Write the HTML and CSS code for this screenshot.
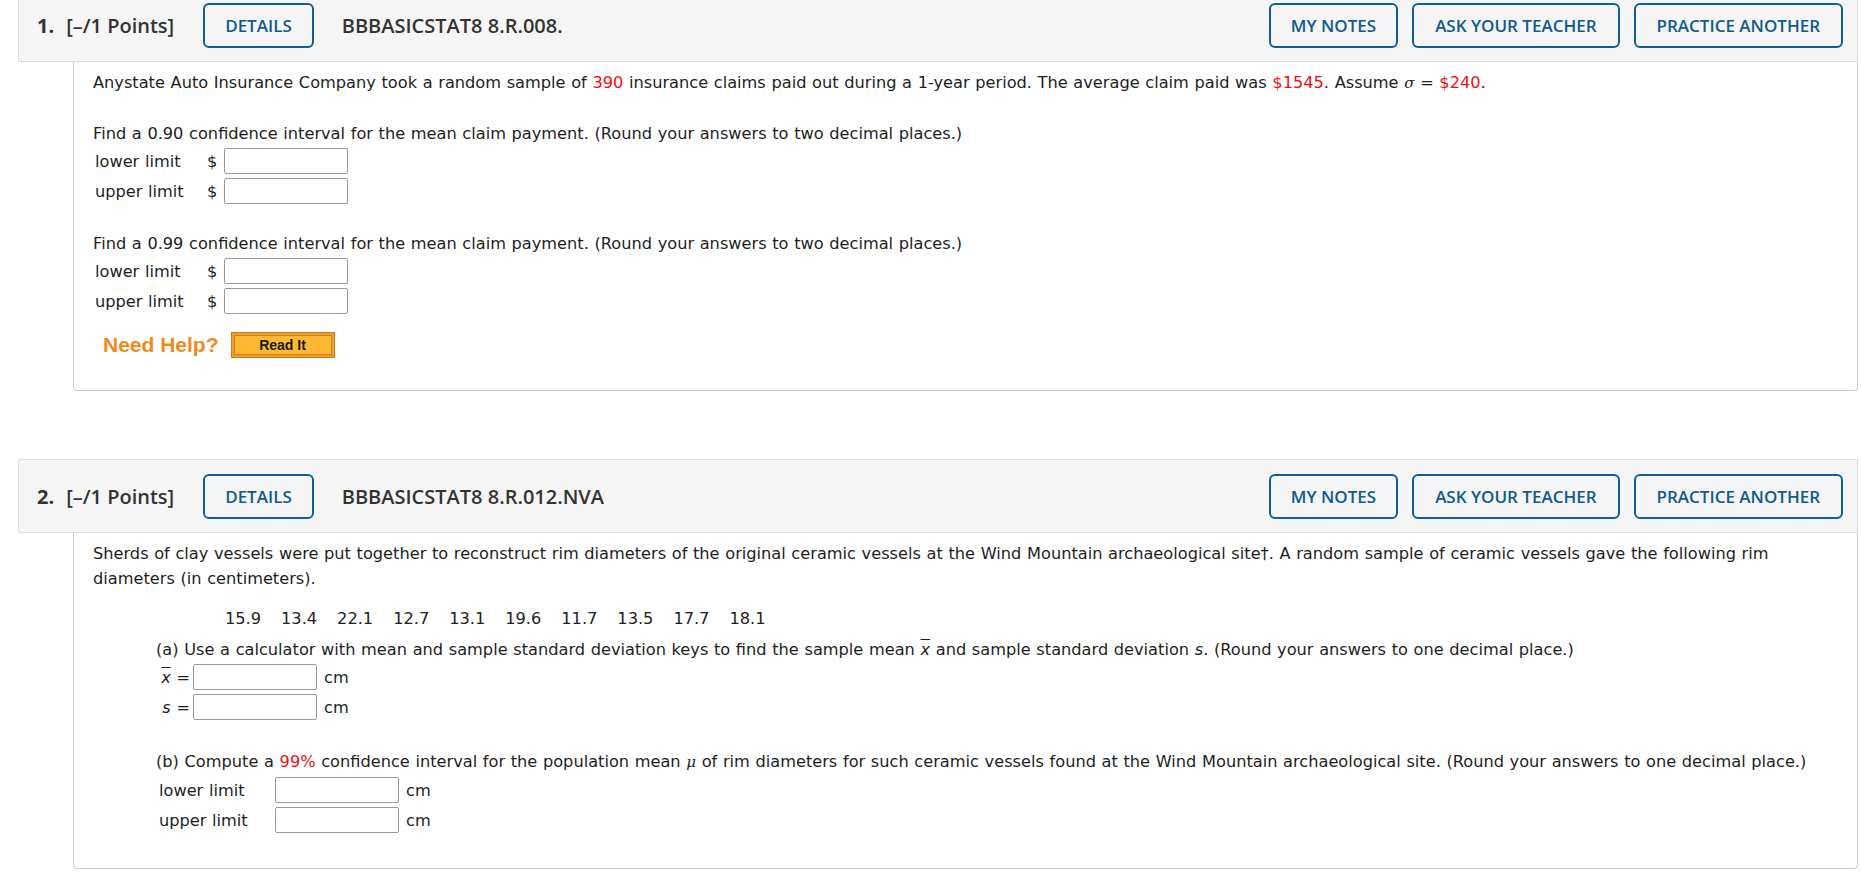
FILE: index.html
```html
<!DOCTYPE html>
<html lang="en">
<head>
<meta charset="utf-8">
<title>Questions</title>
<link rel="stylesheet" href="styles.css">
</head>
<body>
<div class="page">
  <section class="question">
    <div class="q-header">
      <span class="q-num">1.</span>
      <span class="q-points">[–/1 Points]</span>
      <button class="btn">DETAILS</button>
      <span class="q-code">BBBASICSTAT8 8.R.008.</span>
      <div class="q-actions">
        <button class="btn">MY NOTES</button>
        <button class="btn">ASK YOUR TEACHER</button>
        <button class="btn">PRACTICE ANOTHER</button>
      </div>
    </div>
    <div class="q-body body-one">
      <p>Anystate Auto Insurance Company took a random sample of <span class="red">390</span> insurance claims paid out during a 1-year period. The average claim paid was <span class="red">$1545</span>. Assume <i class="sym">σ</i> = <span class="red">$240</span>.</p>
      <p class="gap-25">Find a 0.90 confidence interval for the mean claim payment. (Round your answers to two decimal places.)</p>
      <div class="ans-row"><span class="lbl">lower limit</span><span class="cur">$</span><input class="field" type="text"></div>
      <div class="ans-row"><span class="lbl">upper limit</span><span class="cur">$</span><input class="field" type="text"></div>
      <p class="gap-25">Find a 0.99 confidence interval for the mean claim payment. (Round your answers to two decimal places.)</p>
      <div class="ans-row"><span class="lbl">lower limit</span><span class="cur">$</span><input class="field" type="text"></div>
      <div class="ans-row"><span class="lbl">upper limit</span><span class="cur">$</span><input class="field" type="text"></div>
      <div class="help">
        <span class="help-label">Need Help?</span>
        <button class="read-it"><span>Read It</span></button>
      </div>
    </div>
  </section>

  <section class="question">
    <div class="q-header">
      <span class="q-num">2.</span>
      <span class="q-points">[–/1 Points]</span>
      <button class="btn">DETAILS</button>
      <span class="q-code">BBBASICSTAT8 8.R.012.NVA</span>
      <div class="q-actions">
        <button class="btn">MY NOTES</button>
        <button class="btn">ASK YOUR TEACHER</button>
        <button class="btn">PRACTICE ANOTHER</button>
      </div>
    </div>
    <div class="q-body body-two">
      <p>Sherds of clay vessels were put together to reconstruct rim diameters of the original ceramic vessels at the Wind Mountain archaeological site†. A random sample of ceramic vessels gave the following rim diameters (in centimeters).</p>
      <div class="data">
        <span>15.9</span><span>13.4</span><span>22.1</span><span>12.7</span><span>13.1</span><span>19.6</span><span>11.7</span><span>13.5</span><span>17.7</span><span>18.1</span>
      </div>
      <div class="part">
        <p class="part-a">(a) Use a calculator with mean and sample standard deviation keys to find the sample mean <i class="xbar">x</i> and sample standard deviation <i>s</i>. (Round your answers to one decimal place.)</p>
        <div class="ans-row"><span class="sym-lbl"><i class="xbar">x</i> =</span><input class="field" type="text"><span class="unit">cm</span></div>
        <div class="ans-row"><span class="sym-lbl"><i>s</i> =</span><input class="field" type="text"><span class="unit">cm</span></div>
        <p class="part-b">(b) Compute a <span class="red">99%</span> confidence interval for the population mean <i class="sym">μ</i> of rim diameters for such ceramic vessels found at the Wind Mountain archaeological site. (Round your answers to one decimal place.)</p>
        <div class="ans-row"><span class="lbl-b">lower limit</span><input class="field" type="text"><span class="unit">cm</span></div>
        <div class="ans-row"><span class="lbl-b">upper limit</span><input class="field" type="text"><span class="unit">cm</span></div>
      </div>
    </div>
  </section>
</div>
</body>
</html>
```

FILE: styles.css
```css
* { box-sizing: border-box; }

html, body {
  margin: 0;
  padding: 0;
  background: #fff;
}

body {
  font-family: Verdana, "DejaVu Sans", sans-serif;
  font-size: 16.2px;
  word-spacing: 0.5px;
  color: #1e1e1e;
}

.page {
  margin: -12px 3px 0 18px;
}

.question + .question {
  margin-top: 68px;
}

/* header bar */
.q-header {
  display: flex;
  align-items: center;
  height: 74px;
  padding: 0 14px 0 18px;
  background: #f5f5f5;
  border: 1px solid #ddd;
  font-family: "Open Sans", sans-serif;
  font-weight: 600;
  font-size: 20px;
  word-spacing: 0;
  color: #333;
}

.q-num {
  font-weight: 700;
  margin-right: 12px;
}

.q-points {
  margin-right: 29px;
}

.btn {
  height: 45px;
  padding: 0 20px;
  border: 2px solid #0f5f96;
  border-radius: 6px;
  background: transparent;
  color: #0f5a8e;
  font-family: "Open Sans", sans-serif;
  font-weight: 600;
  font-size: 17px;
  cursor: pointer;
}

.q-code {
  margin-left: 28px;
}

.q-actions {
  margin-left: auto;
  display: flex;
  gap: 14px;
}

.q-actions .btn {
  padding: 0 21px;
}

.q-actions .btn:first-child {
  padding: 0 20px;
}

/* body */
.q-body {
  margin-left: 55px;
  border: 1px solid #ccc;
  border-top: 0;
  border-radius: 0 0 4px 4px;
  padding: 8px 19px 32px;
}

.body-two {
  padding-bottom: 33px;
}

p {
  margin: 0;
  line-height: 25px;
}

.gap-25 {
  margin-top: 25px;
}

.red {
  color: #f01010;
}

.sym {
  font-family: "DejaVu Serif", serif;
  font-size: 15px;
}

.ans-row {
  display: flex;
  align-items: center;
  height: 30px;
}

.lbl {
  width: 112px;
  padding-left: 2px;
}

.cur {
  width: 19px;
  padding-left: 2px;
}

.field {
  width: 124px;
  height: 26px;
  border: 1px solid #999;
  border-radius: 2px;
  padding: 0 4px;
  font: inherit;
  background: #fff;
}

.unit {
  margin-left: 7px;
}

/* need help */
.help {
  display: flex;
  align-items: center;
  height: 26px;
  margin: 16px 0 0 10px;
}

.help-label {
  font-family: "Liberation Sans", Arial, sans-serif;
  font-weight: 700;
  font-size: 21px;
  word-spacing: 0;
  color: #f08a1d;
  margin-right: 12px;
}

.read-it {
  width: 104px;
  height: 26px;
  padding: 2px;
  margin: 0;
  background: #f39c28;
  border: 1px solid #d07a18;
  cursor: pointer;
}

.read-it span {
  display: flex;
  height: 100%;
  align-items: center;
  justify-content: center;
  background: #fdb934;
  border: 1px solid #c98020;
  font-family: "Liberation Sans", Arial, sans-serif;
  font-weight: 700;
  font-size: 14px;
  word-spacing: 0;
  color: #1a1a1a;
}

/* question 2 */
.data {
  display: flex;
  gap: 20px;
  margin: 15px 0 0 132px;
  line-height: 25px;
}

.part {
  margin-left: 63px;
}

.part-a {
  margin-top: 6px;
}

.part-b {
  margin-top: 27px;
}

.xbar {
  text-decoration: overline;
}

.sym-lbl {
  width: 37px;
  text-align: right;
  padding-right: 3px;
}

.lbl-b {
  width: 119px;
  padding-left: 3px;
}
```
